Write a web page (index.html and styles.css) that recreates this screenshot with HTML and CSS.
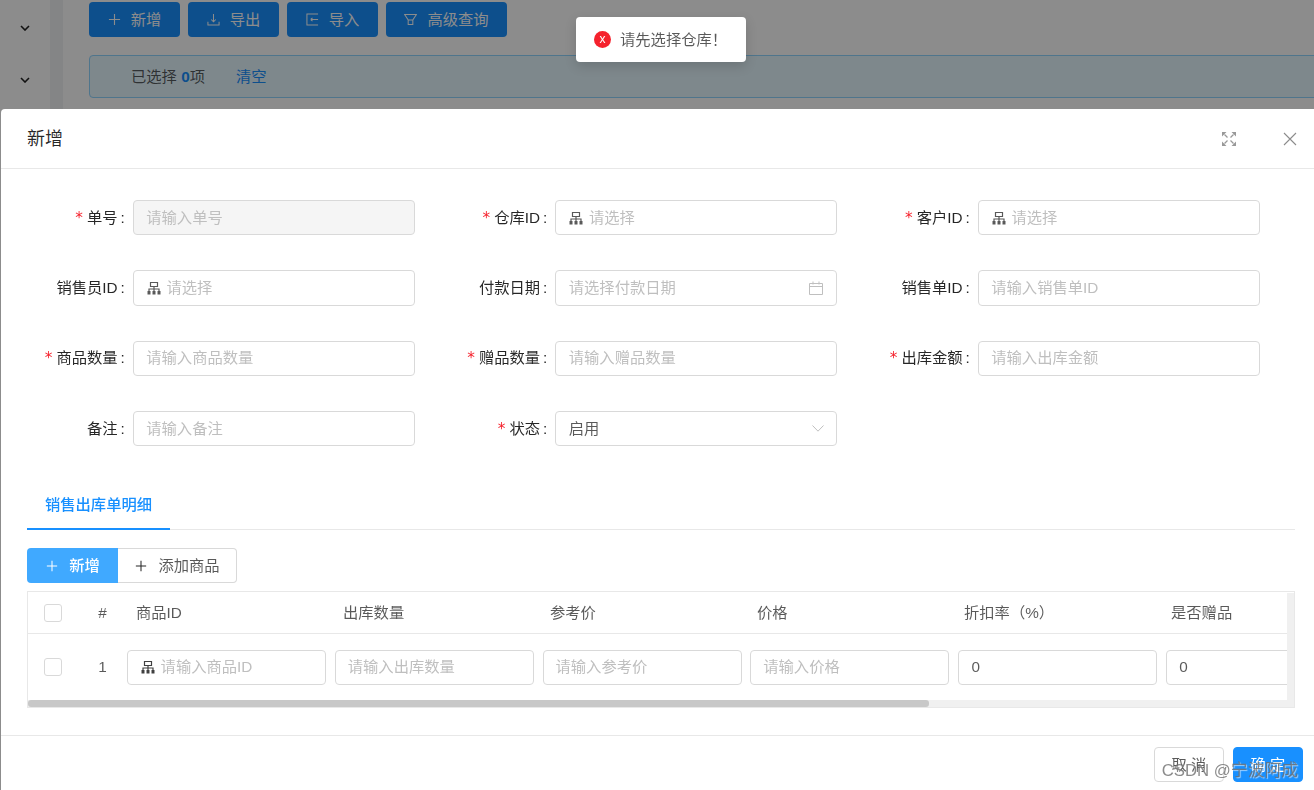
FILE: index.html
```html
<!DOCTYPE html>
<html lang="zh-CN">
<head>
<meta charset="utf-8">
<title>新增</title>
<link rel="stylesheet" href="styles.css">
</head>
<body>
<svg class="defs" width="0" height="0" aria-hidden="true">
  <symbol id="i-cluster" viewBox="0 0 14 14">
    <path d="M3.500 1.500h7v4h-7zM7 5.500v2.500M2 10V8h10v2M7 8v2" fill="none" stroke="currentColor" stroke-width="1.200"/>
    <path d="M.5 10h3v3.500h-3zM5.500 10h3v3.500h-3zM10.500 10h3v3.500h-3z" fill="currentColor"/>
  </symbol>
  <symbol id="i-plus" viewBox="0 0 14 14"><path d="M7 1v12M1 7h12" fill="none" stroke="currentColor" stroke-width="1.2"/></symbol>
</svg>

<div class="page">
  <aside class="side">
    <svg class="chev" viewBox="0 0 10 6"><path d="M1 1l4 4 4-4" fill="none" stroke="currentColor" stroke-width="1.6"/></svg>
    <svg class="chev" viewBox="0 0 10 6"><path d="M1 1l4 4 4-4" fill="none" stroke="currentColor" stroke-width="1.6"/></svg>
  </aside>
  <div class="strip"></div>
  <main class="content">
    <div class="toolbar">
      <button class="tbtn w91"><svg class="ti"><use href="#i-plus"/></svg><span>新增</span></button>
      <button class="tbtn w91"><svg class="ti" viewBox="0 0 14 14"><path d="M7 1v8.500M4.500 7L7 9.500 9.500 7M1 9.500v3.500h12V9.500" fill="none" stroke="currentColor" stroke-width="1.100"/></svg><span>导出</span></button>
      <button class="tbtn w91"><svg class="ti" viewBox="0 0 14 14"><path d="M13 1H1v12h12M5 7h8M5 7l2-1.700M5 7l2 1.700" fill="none" stroke="currentColor" stroke-width="1.100"/></svg><span>导入</span></button>
      <button class="tbtn w121"><svg class="ti" viewBox="0 0 14 14"><path d="M.5 1.500h13L9.500 7.500v5h-5v-5zM4.500 7.500h5" fill="none" stroke="currentColor" stroke-width="1.100"/></svg><span>高级查询</span></button>
    </div>
    <div class="alert"><span>已选择 <b>0</b>项</span><a class="clear">清空</a></div>
  </main>
</div>
<div class="mask"></div>

<div class="modal">
  <header class="m-head">
    <h1>新增</h1>
    <div class="m-tools">
      <svg class="expand" viewBox="0 0 14 14"><path d="M0 0h4.500L0 4.500zM14 0v4.500L9.500 0zM0 14V9.500L4.500 14zM14 14H9.500L14 9.500z" fill="currentColor"/><path d="M2.500 2.500l3 3M11.500 2.500l-3 3M2.500 11.500l3-3M11.500 11.500l-3-3" fill="none" stroke="currentColor" stroke-width="1.300"/></svg>
      <svg class="close" viewBox="0 0 14 14"><path d="M1 1l12 12M13 1L1 13" fill="none" stroke="currentColor" stroke-width="1.100"/></svg>
    </div>
  </header>

  <div class="m-body">
    <form class="form">
      <div class="item"><label class="req">单号</label><div class="input disabled"><span class="ph">请输入单号</span></div></div>
      <div class="item"><label class="req">仓库ID</label><div class="input"><svg class="ci"><use href="#i-cluster"/></svg><span class="ph">请选择</span></div></div>
      <div class="item"><label class="req">客户ID</label><div class="input"><svg class="ci"><use href="#i-cluster"/></svg><span class="ph">请选择</span></div></div>

      <div class="item"><label>销售员ID</label><div class="input"><svg class="ci"><use href="#i-cluster"/></svg><span class="ph">请选择</span></div></div>
      <div class="item"><label>付款日期</label><div class="input"><span class="ph grow">请选择付款日期</span><svg class="suffix" viewBox="0 0 14 14"><path d="M.5 2.500h13v11H.5zM.5 5.500h13M4 .5v3M10 .5v3" fill="none" stroke="currentColor"/></svg></div></div>
      <div class="item"><label>销售单ID</label><div class="input"><span class="ph">请输入销售单ID</span></div></div>

      <div class="item"><label class="req">商品数量</label><div class="input"><span class="ph">请输入商品数量</span></div></div>
      <div class="item"><label class="req">赠品数量</label><div class="input"><span class="ph">请输入赠品数量</span></div></div>
      <div class="item"><label class="req">出库金额</label><div class="input"><span class="ph">请输入出库金额</span></div></div>

      <div class="item"><label>备注</label><div class="input"><span class="ph">请输入备注</span></div></div>
      <div class="item"><label class="req">状态</label><div class="input"><span class="val grow">启用</span><svg class="suffix arrow" viewBox="0 0 12 7"><path d="M.5.5L6 6.200 11.500.5" fill="none" stroke="currentColor"/></svg></div></div>
    </form>

    <div class="tabs"><div class="tab">销售出库单明细</div></div>

    <div class="btn-group">
      <button class="gbtn primary"><svg class="gi"><use href="#i-plus"/></svg><span>新增</span></button>
      <button class="gbtn plain"><svg class="gi dark"><use href="#i-plus"/></svg><span>添加商品</span></button>
    </div>

    <div class="table">
      <div class="thead">
        <div class="cc"><i class="check"></i></div>
        <div class="cn">#</div>
        <div class="th">商品ID</div>
        <div class="th">出库数量</div>
        <div class="th">参考价</div>
        <div class="th">价格</div>
        <div class="th">折扣率（%）</div>
        <div class="th">是否赠品</div>
      </div>
      <div class="tbody">
        <div class="cc"><i class="check"></i></div>
        <div class="cn">1</div>
        <div class="td"><div class="input"><svg class="ci dark"><use href="#i-cluster"/></svg><span class="ph">请输入商品ID</span></div></div>
        <div class="td"><div class="input small"><span class="ph">请输入出库数量</span></div></div>
        <div class="td"><div class="input small"><span class="ph">请输入参考价</span></div></div>
        <div class="td"><div class="input small"><span class="ph">请输入价格</span></div></div>
        <div class="td"><div class="input"><span class="val">0</span></div></div>
        <div class="td"><div class="input"><span class="val">0</span></div></div>
      </div>
      <div class="vbar"></div>
      <div class="hbar"><div class="thumb"></div></div>
    </div>
  </div>

  <footer class="m-foot">
    <button class="fbtn">取 消</button>
    <button class="fbtn ok">确 定</button>
  </footer>
</div>

<div class="toast"><span class="t-icon">x</span><span class="t-text">请先选择仓库！</span></div>
<div class="mark">CSDN @宁波阿成</div>
</body>
</html>
```

FILE: styles.css
```css
* { box-sizing: border-box; }
html, body { margin: 0; height: 100%; overflow: hidden; }
body {
  font-family: "Liberation Sans", "Noto Sans CJK SC", sans-serif;
  font-size: 15.3px;
  line-height: 20px;
  color: rgba(0, 0, 0, .65);
  background: #fff;
}
.defs { position: absolute; }
button { font: inherit; cursor: pointer; }

/* page under the mask */
.page { display: flex; height: 790px; background: #fff; }
.side { width: 50px; flex: none; display: flex; flex-direction: column; align-items: center; padding-top: 25px; gap: 46px; color: #222; }
.chev { width: 10px; height: 6px; }
.strip { width: 13px; flex: none; background: #f0f2f5; }
.content { flex: 1; padding: 2px 0 0 26px; min-width: 0; }
.toolbar { display: flex; gap: 8px; }
.tbtn {
  height: 35px; background: #1890ff; color: #fff; border: 0; border-radius: 4px;
  display: flex; align-items: center; justify-content: center; gap: 10px; padding: 0;
}
.w91 { width: 91px; }
.w121 { width: 121px; }
.ti { width: 13px; height: 13px; flex: none; }
.alert {
  margin: 18px -20px 0 0; height: 43px; border: 1px solid #91d5ff; border-radius: 4px 0 0 4px;
  background: #e6f7ff; display: flex; align-items: center; padding-left: 41px; gap: 31px; color: rgba(0,0,0,.65);
}
.alert b { color: #1890ff; }
.clear { color: #1890ff; }
.mask { position: fixed; inset: 0; background: rgba(0, 0, 0, .45); }

/* modal */
.modal {
  position: fixed; left: 1px; top: 109px; width: 1313px; height: 681px;
  background: #fff; border-radius: 4px 0 0 0; display: flex; flex-direction: column;
}
.m-head { height: 60px; flex: none; border-bottom: 1px solid #e8e8e8; display: flex; align-items: center; justify-content: space-between; padding: 0 17px 0 26px; }
.m-head h1 { margin: 1px 0 0; font-size: 18px; line-height: 24px; font-weight: 400; color: rgba(0,0,0,.85); }
.m-tools { display: flex; align-items: center; gap: 47px; color: #999; }
.expand { width: 14px; height: 14px; margin-left: -1px; }
.close { width: 14px; height: 14px; color: #8c8c8c; }

.m-body { flex: 1; padding: 31px 19px 0 26px; min-height: 0; }
.form { display: grid; grid-template-columns: repeat(3, 422.5px); row-gap: 35.03px; }
.item { display: grid; grid-template-columns: 105.85px 281.7px; align-items: center; height: 35.3px; }
.item label { text-align: right; padding-right: 8px; color: rgba(0,0,0,.85); white-space: nowrap; }
.item label::after { content: ":"; margin-left: 3px; }
.req::before { content: "*"; color: #f5222d; margin-right: 4px; font-family: "DejaVu Sans", sans-serif; }

.input {
  height: 35.3px; border: 1px solid #d9d9d9; border-radius: 4px; background: #fff;
  display: flex; align-items: center; padding: 0 12.4px; white-space: nowrap; overflow: hidden;
}
.input.disabled { background: #f5f5f5; }
.input.small { padding: 0 12px; }
.ph { color: #bfbfbf; }
.val { color: rgba(0,0,0,.65); }
.grow { flex: 1; }
.ci { width: 14px; height: 14px; flex: none; margin: 0 5.6px 0 .6px; color: #595959; }
.ci.dark { color: #404040; }
.suffix { width: 14px; height: 14px; color: #bfbfbf; flex: none; margin-right: .6px; }
.arrow { width: 12px; height: 7px; margin: 0; }

.tabs { margin-top: 36px; height: 48px; border-bottom: 1px solid #e8e8e8; display: flex; }
.tab {
  width: 143px; height: 48px; border-bottom: 2px solid #1890ff; color: #1890ff; font-weight: 500;
  display: flex; align-items: center; justify-content: center;
}

.btn-group { display: flex; margin-top: 18px; }
.gbtn { height: 35px; display: flex; align-items: center; justify-content: center; gap: 11px; padding: 0 0 0 1px; }
.primary { width: 91px; background: #40a9ff; color: #fff; border: 0; border-radius: 4px 0 0 4px; font-weight: 500; }
.plain { width: 119px; background: #fff; color: rgba(0,0,0,.65); border: 1px solid #d9d9d9; border-left: 0; border-radius: 0 4px 4px 0; }
.gi { width: 12px; height: 12px; flex: none; }
.gi.dark { color: #262626; }

.table { position: relative; margin-top: 8px; height: 117px; border: 1px solid #e8e8e8; overflow: hidden; }
.thead { display: grid; grid-template-columns: 50px 49px repeat(6, 207px); height: 42px; align-items: center; border-bottom: 1px solid #e8e8e8; white-space: nowrap; width: 1400px; }
.tbody { display: grid; grid-template-columns: 50px 49px repeat(6, 207.75px); height: 66px; align-items: center; width: 1400px; }
.cc { padding-left: 16px; display: flex; }
.cn { text-align: center; }
.th { padding-left: 9px; }
.td { padding-right: 8.75px; }
.check { width: 18px; height: 18px; border: 1px solid #d9d9d9; border-radius: 3px; background: #fff; display: block; }
.vbar { position: absolute; right: 0; top: 1px; bottom: 0; width: 7px; background: #f0f0f0; }
.hbar { position: absolute; left: 0; right: 0; bottom: 0; height: 7px; background: #f0f0f0; }
.thumb { width: 901px; height: 7px; border-radius: 3px; background: #c8c8c8; }

.m-foot { height: 55px; flex: none; border-top: 1px solid #e8e8e8; display: flex; justify-content: flex-end; gap: 9px; padding: 11px 11px 0 0; }
.fbtn { width: 70px; height: 35px; border-radius: 4px; background: #fff; border: 1px solid #d9d9d9; color: rgba(0,0,0,.65); padding: 0; }
.fbtn.ok { background: #1890ff; border-color: #1890ff; color: #fff; }

/* overlays */
.toast {
  position: fixed; left: 576px; top: 17px; width: 170px; height: 45px; background: #fff; border-radius: 4px;
  box-shadow: 0 4px 12px rgba(0,0,0,.15); display: flex; align-items: center; padding-left: 18px; gap: 9px; color: rgba(0,0,0,.65);
}
.t-icon {
  width: 17px; height: 17px; border-radius: 50%; background: #f5222d; color: #fff; font-size: 12px;
  display: flex; align-items: center; justify-content: center; flex: none; line-height: 1; padding-bottom: 1px;
}
.t-text { white-space: nowrap; }
.mark {
  position: fixed; right: 16px; top: 759px; font-size: 16.8px; line-height: 24px; white-space: nowrap;
  color: rgba(110, 110, 110, .8); text-shadow: 1px 1px 1px rgba(255,255,255,.6);
}
```
